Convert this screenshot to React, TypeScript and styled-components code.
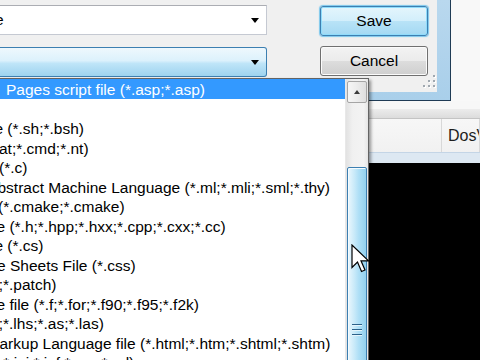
import React from "react";
import styled, { createGlobalStyle } from "styled-components";

const Global = createGlobalStyle`
  html, body { margin: 0; padding: 0; background: #000; }
  body { font-family: "Liberation Sans", Arial, sans-serif; }
  #root { width: 480px; height: 360px; }
`;

const Screen = styled.div`
  position: relative;
  width: 480px;
  height: 360px;
  overflow: hidden;
  display: flex;
  flex-direction: column;
  background: #f7f7f7;
  font-family: "Liberation Sans", Arial, sans-serif;
  font-size: 15.5px;
  color: #000;
`;

const TopRow = styled.div`
  display: flex;
  height: 101px;
  flex: none;
`;

const DialogFrame = styled.div`
  flex: none;
  background: linear-gradient(180deg, #b9d8ee, #a9cfea);
  padding: 0 13px 8px 0;
  border-right: 1px solid #1f3b55;
  border-bottom: 1px solid #1f3b55;
`;

const DialogBody = styled.div`
  position: relative;
  width: 437px;
  height: 92px;
  background: #f0f0f0;
  display: flex;
  align-items: flex-start;
`;

const FieldColumn = styled.div`
  width: 267px;
  padding-top: 5px;
  display: flex;
  flex-direction: column;
  gap: 12px;
`;

const Combo = styled.div<{ $hot?: boolean }>`
  height: 30px;
  box-sizing: border-box;
  display: flex;
  align-items: center;
  overflow: hidden;
  border: 1px solid ${(p) => (p.$hot ? "#3c7fb1" : "#c5c9d2")};
  border-top-color: ${(p) => (p.$hot ? "#3c7fb1" : "#abadb3")};
  border-left: none;
  border-radius: ${(p) => (p.$hot ? "0 3px 3px 0" : "0")};
  background: ${(p) =>
    p.$hot
      ? "linear-gradient(180deg, #eef8fd 0%, #dcf1fc 45%, #bfe5f8 55%, #9ed3ef 100%)"
      : "#fff"};
`;

const ComboText = styled.span`
  flex: 1;
  white-space: nowrap;
  text-indent: -5px;
  line-height: 28px;
`;

const ArrowBox = styled.div`
  width: 22px;
  height: 100%;
  display: flex;
  align-items: center;
  justify-content: center;
`;

const DownArrow = styled.div`
  width: 0;
  height: 0;
  border-left: 4.5px solid transparent;
  border-right: 4.5px solid transparent;
  border-top: 5px solid #000;
`;

const ButtonColumn = styled.div`
  margin-left: 53px;
  padding-top: 6px;
  display: flex;
  flex-direction: column;
  gap: 10px;
`;

const Button = styled.div<{ $default?: boolean }>`
  width: 108px;
  height: 30px;
  box-sizing: border-box;
  border-radius: 3px;
  display: flex;
  align-items: center;
  justify-content: center;
  color: #000;
  border: 1px solid ${(p) => (p.$default ? "#3c7fb1" : "#707070")};
  background: ${(p) =>
    p.$default
      ? "linear-gradient(180deg, #e4f5fc 0%, #d2eefb 50%, #b9e3f7 50%, #a4d9f3 100%)"
      : "linear-gradient(180deg, #f3f3f3 0%, #ebebeb 50%, #dddddd 50%, #cfcfcf 100%)"};
  box-shadow: ${(p) =>
    p.$default ? "inset 0 0 0 1px #8fdcfb, 0 0 1px 1px #7cc7ec" : "inset 0 0 0 1px #fbfbfb"};
`;

const Grip = styled.svg`
  position: absolute;
  right: 1px;
  bottom: 4px;
`;

const SideFill = styled.div`
  flex: 1;
  background: #f8f8f8;
`;

const BackWindow = styled.div`
  flex: 1;
  display: flex;
  flex-direction: column;
`;

const WhiteBand = styled.div`
  height: 8px;
  background: #f7f7f7;
`;

const ToolStrip = styled.div`
  height: 9px;
  background: linear-gradient(180deg, #ececec, #dcdcdc);
  border-bottom: 1px solid #c4c4c4;
`;

const Header = styled.div`
  height: 33px;
  display: flex;
  background: linear-gradient(180deg, #f7f7f7, #f1f1f1);
`;

const HeaderCol = styled.div<{ $w?: number }>`
  ${(p) => (p.$w ? `width: ${p.$w}px; flex: none;` : "flex: 1;")}
  box-sizing: border-box;
  border-right: 1px solid #d8d8d8;
  display: flex;
  align-items: center;
  padding-left: 6px;
  font-size: 16px;
  color: #1e1e1e;
  white-space: nowrap;
  overflow: hidden;
`;

const Band = styled.div`
  height: 10px;
  background: #dde8f2;
  border-top: 1px solid #c4d5e6;
`;

const Console = styled.div`
  flex: 1;
  background: #000;
`;

const DropList = styled.div`
  position: absolute;
  left: 0;
  top: 78px;
  width: 368px;
  height: 320px;
  background: #fff;
  border-top: 1px solid #646464;
  border-right: 1px solid #646464;
  box-shadow: 2px 2px 3px rgba(0, 0, 0, 0.4);
  display: flex;
`;

const Items = styled.div`
  width: 345px;
  flex: none;
  overflow: hidden;
  display: flex;
  flex-direction: column;
`;

const Item = styled.div<{ $active?: boolean }>`
  height: 19.5px;
  line-height: 21px;
  flex: none;
  white-space: nowrap;
  background: ${(p) => (p.$active ? "#3399ff" : "transparent")};
  color: ${(p) => (p.$active ? "#fff" : "#000")};
`;

const Scrollbar = styled.div`
  flex: 1;
  padding: 2px 1px 0 1px;
  display: flex;
  flex-direction: column;
  align-items: stretch;
  background: linear-gradient(90deg, #e2e2e2 0%, #f0f0f0 30%, #f3f3f3 80%, #e6e6e6 100%);
  border-left: 1px solid #e8e8e8;
`;

const ScrollButton = styled.div`
  height: 22px;
  flex: none;
  box-sizing: border-box;
  border: 1px solid #a5a5a5;
  border-radius: 2px;
  background: linear-gradient(90deg, #f6f6f6, #ececec 50%, #dedede);
  display: flex;
  align-items: center;
  justify-content: center;
`;

const UpArrow = styled.div`
  width: 0;
  height: 0;
  border-left: 3.5px solid transparent;
  border-right: 3.5px solid transparent;
  border-bottom: 4px solid #3b3b3b;
`;

const Thumb = styled.div`
  margin-top: 64px;
  height: 326px;
  flex: none;
  box-sizing: border-box;
  border: 1px solid #3c7fb1;
  border-radius: 2px;
  background: linear-gradient(90deg, #eaf7fd 0%, #c9eaf9 35%, #aedff6 60%, #93d1ef 100%);
  box-shadow: inset 1px 1px 0 #f4fbff;
  display: flex;
  flex-direction: column;
  align-items: center;
  justify-content: center;
  gap: 3px;
`;

const GripLine = styled.div`
  width: 10px;
  height: 1px;
  background: #2c628b;
  border-bottom: 1px solid #e6f5fc;
`;

const Cursor = styled.svg`
  position: absolute;
  left: 351px;
  top: 244px;
`;

type Row = { text: string; x: number; active?: boolean };

const rows: Row[] = [
  { text: "Pages script file (*.asp;*.asp)", x: 6, active: true },
  { text: "", x: 0 },
  { text: "e (*.sh;*.bsh)", x: -5.6 },
  { text: "at;*.cmd;*.nt)", x: -1 },
  { text: "(*.c)", x: -1 },
  { text: "bstract Machine Language (*.ml;*.mli;*.sml;*.thy)", x: -2.5 },
  { text: "(*.cmake;*.cmake)", x: -2 },
  { text: "e (*.h;*.hpp;*.hxx;*.cpp;*.cxx;*.cc)", x: -3.5 },
  { text: "e (*.cs)", x: -5.6 },
  { text: "e Sheets File (*.css)", x: -3 },
  { text: ";*.patch)", x: -1.3 },
  { text: "e file (*.f;*.for;*.f90;*.f95;*.f2k)", x: -3.5 },
  { text: ";*.lhs;*.as;*.las)", x: -1.3 },
  { text: "arkup Language file (*.html;*.htm;*.shtml;*.shtm)", x: -0.5 },
  { text: ";*.ini;*.inf;*.reg;*.url)", x: -1 },
];

export default function App() {
  return (
    <>
      <Global />
      <Screen>
        <TopRow>
          <DialogFrame>
            <DialogBody>
              <FieldColumn>
                <Combo>
                  <ComboText>e</ComboText>
                  <ArrowBox>
                    <DownArrow />
                  </ArrowBox>
                </Combo>
                <Combo $hot>
                  <ComboText />
                  <ArrowBox>
                    <DownArrow />
                  </ArrowBox>
                </Combo>
              </FieldColumn>
              <ButtonColumn>
                <Button $default>Save</Button>
                <Button>Cancel</Button>
              </ButtonColumn>
              <Grip width="14" height="14" viewBox="0 0 14 14">
                {[
                  [11, 1],
                  [6, 6],
                  [11, 6],
                  [1, 11],
                  [6, 11],
                  [11, 11],
                ].map(([x, y]) => (
                  <g key={`${x}-${y}`}>
                    <rect x={x + 1} y={y + 1} width="2" height="2" fill="#ffffff" />
                    <rect x={x} y={y} width="2" height="2" fill="#a0a8b0" />
                  </g>
                ))}
              </Grip>
            </DialogBody>
          </DialogFrame>
          <SideFill />
        </TopRow>
        <BackWindow>
          <WhiteBand />
          <ToolStrip />
          <Header>
            <HeaderCol $w={442} />
            <HeaderCol>DosV</HeaderCol>
          </Header>
          <Band />
          <Console />
        </BackWindow>

        <DropList>
          <Items>
            {rows.map((r, i) => (
              <Item key={i} $active={r.active} style={{ textIndent: `${r.x}px` }}>
                {r.text}
              </Item>
            ))}
          </Items>
          <Scrollbar>
            <ScrollButton>
              <UpArrow />
            </ScrollButton>
            <Thumb>
              <GripLine />
              <GripLine />
              <GripLine />
            </Thumb>
          </Scrollbar>
        </DropList>

        <Cursor width="20" height="30" viewBox="0 0 20 30">
          <path
            d="M1 1 L1 23.5 L6.5 18 L10.5 27.5 L14 26 L10 16.8 L17.5 16.8 Z"
            fill="#fff"
            stroke="#000"
            strokeWidth="1.2"
            strokeLinejoin="miter"
          />
        </Cursor>
      </Screen>
    </>
  );
}
